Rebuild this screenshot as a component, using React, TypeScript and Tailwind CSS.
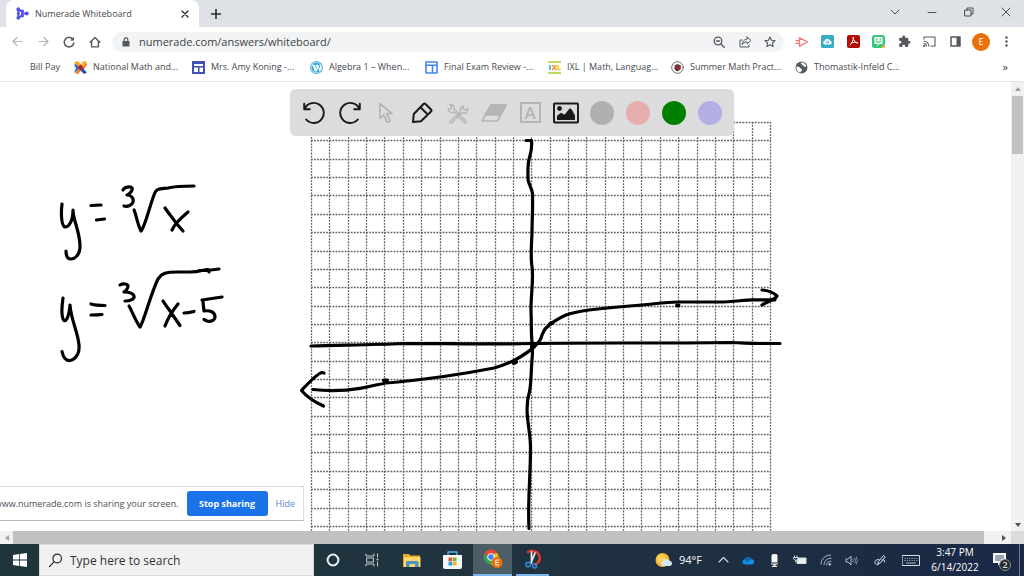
import type { ReactNode } from "react";

const FONT = "font-['Open_Sans','Noto_Sans',sans-serif]";

function Icon({
  size,
  width,
  box,
  stroke = 1.2,
  className = "",
  children,
}: {
  size: number;
  width?: number;
  box?: string;
  stroke?: number;
  className?: string;
  children: ReactNode;
}) {
  const w = width ?? size;
  return (
    <svg
      width={w}
      height={size}
      viewBox={box ?? `0 0 ${w} ${size}`}
      fill="none"
      stroke="currentColor"
      strokeWidth={stroke}
      strokeLinecap="round"
      strokeLinejoin="round"
      className={`shrink-0 ${className}`}
      aria-hidden="true"
    >
      {children}
    </svg>
  );
}

function IconButton({ label, className, children }: { label: string; className: string; children: ReactNode }) {
  return (
    <button type="button" aria-label={label} className={`flex shrink-0 items-center justify-center ${className}`}>
      {children}
    </button>
  );
}

function NumeradeLogo() {
  return (
    <Icon size={13} className="text-[#5452ee]" stroke={2}>
      <path d="M2.3 2.3v8.4M2.3 2.3l4 2.2M2.3 10.7l4-2.2M6.2 4.4v4M6.2 6.4h4.6" />
      <g fill="currentColor" stroke="none">
        <circle cx="2.3" cy="2.2" r="1.9" />
        <circle cx="2.3" cy="6.5" r="1.5" />
        <circle cx="2.3" cy="10.8" r="1.9" />
        <circle cx="6.3" cy="4.3" r="1.7" />
        <circle cx="6.3" cy="8.7" r="1.7" />
        <circle cx="10.8" cy="6.5" r="1.9" />
      </g>
    </Icon>
  );
}

function TabStrip() {
  return (
    <div className="flex h-[27px] shrink-0 bg-[#dee1e6] pl-[6px]">
      <div className="flex h-full w-[193px] shrink-0 items-center rounded-t-lg bg-white pr-2 pl-[10px]">
        <NumeradeLogo />
        <span className="ml-[6px] flex-1 text-[9px] leading-4 whitespace-nowrap text-[#45494d]">Numerade Whiteboard</span>
        <IconButton label="Close tab" className="size-3 text-[#2b2d30]">
          <Icon size={8} stroke={1.4}>
            <path d="M1 1l6 6M7 1l-6 6" />
          </Icon>
        </IconButton>
      </div>
      <IconButton label="New tab" className="ml-[10px] h-full w-[14px] text-[#2b2d30]">
        <Icon size={10} stroke={1.6}>
          <path d="M5 .5v9M.5 5h9" />
        </Icon>
      </IconButton>
      <div className="ml-auto flex h-6 text-[#4b4e52]">
        <IconButton label="Search tabs" className="w-[37px]">
          <Icon size={10} stroke={1}>
            <path d="M1 3l4 4 4-4" />
          </Icon>
        </IconButton>
        <IconButton label="Minimize" className="w-[37px]">
          <Icon size={10} stroke={1}>
            <path d="M1 5.5h8" />
          </Icon>
        </IconButton>
        <IconButton label="Restore" className="w-[37px]">
          <Icon size={10} stroke={1}>
            <path d="M1 3h6v6H1zM3 3V1h6v6H7" />
          </Icon>
        </IconButton>
        <IconButton label="Close" className="w-[37px]">
          <Icon size={10} stroke={1}>
            <path d="M1 1l8 8M9 1L1 9" />
          </Icon>
        </IconButton>
      </div>
    </div>
  );
}

function AddressRow() {
  return (
    <div className="flex h-[29px] shrink-0 items-center bg-white pr-[5px] pl-1 text-[#55595e]">
      <IconButton label="Back" className="h-5 w-[26px] text-[#b3b5b8]">
        <Icon size={11}>
          <path d="M10 5.5H1M5 1.5l-4 4 4 4" />
        </Icon>
      </IconButton>
      <IconButton label="Forward" className="h-5 w-[26px] text-[#b3b5b8]">
        <Icon size={11}>
          <path d="M1 5.5h9M6 1.5l4 4-4 4" />
        </Icon>
      </IconButton>
      <IconButton label="Reload" className="h-5 w-[26px]">
        <Icon size={12} stroke={1.5}>
          <path d="M10.2 3.7A4.8 4.8 0 1 0 10.8 7" />
          <path d="M10.9.8v3.8H7z" fill="currentColor" stroke="none" />
        </Icon>
      </IconButton>
      <IconButton label="Home" className="h-5 w-[26px]">
        <Icon size={12} stroke={1.4}>
          <path d="M1.2 6.3L6 1.4l4.8 4.9M2.6 5.3v5.6h6.8V5.3" />
        </Icon>
      </IconButton>
      <div className="ml-1 flex h-5 min-w-0 flex-1 items-center rounded-full bg-[#f1f3f4] pl-[10px]">
        <Icon size={10} width={8}>
          <rect x=".5" y="4" width="7" height="5.5" rx=".6" fill="currentColor" stroke="none" />
          <path d="M2.2 4V2.6a1.8 1.8 0 0 1 3.6 0V4" />
        </Icon>
        <input
          aria-label="Address and search bar"
          defaultValue="numerade.com/answers/whiteboard/"
          className="ml-[9px] h-5 min-w-0 flex-1 bg-transparent text-[11px] leading-5 text-[#3f4246] outline-none"
        />
        <IconButton label="Zoom" className="h-5 w-[26px]">
          <Icon size={12} stroke={1.3}>
            <circle cx="5" cy="5" r="3.8" />
            <path d="M8 8l3.2 3.2M3.4 5h3.2" />
          </Icon>
        </IconButton>
        <IconButton label="Share this page" className="h-5 w-[26px]">
          <Icon size={12} width={13} stroke={1}>
            <path d="M3 4H1v7h9V9M8 1l4 3.4L8 7.8V5.900C5.500 5.900 4 7 3.200 8.700 3.400 5.500 5 3.300 8 3z" />
          </Icon>
        </IconButton>
        <IconButton label="Bookmark this tab" className="h-5 w-6">
          <Icon size={12} stroke={1.1}>
            <path d="M6 1l1.500 3.200 3.500.4-2.600 2.400.7 3.500L6 8.800l-3.100 1.700.7-3.500L1 4.600l3.500-.4z" />
          </Icon>
        </IconButton>
        <div className="w-[2px]" />
      </div>
      <div className="ml-[5px] flex">
        <IconButton label="Screencastify" className="h-5 w-[26px] text-[#f3797b]">
          <Icon size={12} width={14} stroke={1.4}>
            <path d="M4.500 1.800v8.400L12.500 6zM1 4.600h3M1 7.400h3" />
          </Icon>
        </IconButton>
        <IconButton label="Cloud extension" className="h-5 w-[25px]">
          <Icon size={13}>
            <rect width="13" height="13" rx="1.500" fill="#35adc6" stroke="none" />
            <path d="M3.800 9.600a2 2 0 0 1-.2-3.900 2.800 2.800 0 0 1 5.300-.2 2.100 2.100 0 0 1 .2 4.100z" fill="#fff" stroke="none" />
            <circle cx="6.500" cy="7.200" r="1.200" stroke="#35adc6" strokeWidth=".8" />
          </Icon>
        </IconButton>
        <IconButton label="Adobe Acrobat" className="h-5 w-[26px]">
          <Icon size={13}>
            <rect width="13" height="13" rx="2" fill="#b30b00" stroke="none" />
            <path d="M6.300 2.600c.2 2.400-1.300 6-3.300 7.400M6.300 2.600c-.3 2.600 1.500 4.800 4 5.200M4.600 7.800c1.500-.6 3.700-.8 5.700 0" stroke="#fff" strokeWidth="1" />
          </Icon>
        </IconButton>
        <IconButton label="Bitmoji" className="h-5 w-[25px]">
          <Icon size={13}>
            <rect width="13" height="13" rx="2.500" fill="#34c77b" stroke="none" />
            <path d="M2.500 2h8v7h-3L5.500 11V9h-3z" fill="#fff" stroke="none" />
            <path d="M4.800 3.600v1M8.200 3.600v1M4.200 6c.8 1.600 3.800 1.600 4.600 0" stroke="#34c77b" />
            <path d="M8.500 13L13 9v2.500A1.500 1.500 0 0 1 11.500 13z" fill="#f5b93b" stroke="none" />
          </Icon>
        </IconButton>
        <IconButton label="Extensions" className="h-5 w-[26px]">
          <Icon size={13} box="0 0 24 24" stroke={0}>
            <path
              fill="currentColor"
              d="M20.500 11H19V7a2 2 0 0 0-2-2h-4V3.500a2.500 2.500 0 0 0-5 0V5H4a2 2 0 0 0-2 2v3.800h1.500a2.700 2.700 0 0 1 0 5.400H2V20a2 2 0 0 0 2 2h3.800v-1.500a2.700 2.700 0 0 1 5.400 0V22H17a2 2 0 0 0 2-2v-4h1.500a2.500 2.500 0 0 0 0-5z"
            />
          </Icon>
        </IconButton>
        <IconButton label="Cast" className="h-5 w-[25px]">
          <Icon size={11} width={13} stroke={1.1}>
            <path d="M1 3V1h11v9H8M1 5.200A5 5 0 0 1 5.800 10M1 7.500A2.600 2.600 0 0 1 3.500 10" />
            <circle cx="1.200" cy="9.900" r=".5" fill="currentColor" />
          </Icon>
        </IconButton>
        <IconButton label="Side panel" className="h-5 w-[26px]">
          <Icon size={11} width={11} stroke={1.500}>
            <path d="M1 1h9v9H1z" />
            <path d="M6.500 1H10v9H6.500z" fill="currentColor" stroke="none" />
          </Icon>
        </IconButton>
        <IconButton label="Profile" className="h-5 w-[26px]">
          <span className="flex size-[18px] items-center justify-center rounded-full bg-[#e8710a] text-[9px] leading-3 text-white">
            E
          </span>
        </IconButton>
        <IconButton label="Menu" className="h-5 w-[25px]">
          <Icon size={11} width={3} stroke={0}>
            <g fill="currentColor">
              <circle cx="1.500" cy="1.500" r="1.200" />
              <circle cx="1.500" cy="5.500" r="1.200" />
              <circle cx="1.500" cy="9.500" r="1.200" />
            </g>
          </Icon>
        </IconButton>
      </div>
    </div>
  );
}

function Bookmark({ label, className, children }: { label: string; className: string; children?: ReactNode }) {
  return (
    <a href="#bookmark" className={`flex shrink-0 items-center whitespace-nowrap ${className}`}>
      {children}
      <span>{label}</span>
    </a>
  );
}

function BookmarksBar() {
  return (
    <nav
      aria-label="Bookmarks"
      className="flex h-[26px] shrink-0 items-center border-b border-[#e2e4e6] bg-white pr-4 pb-[3px] pl-[30px] text-[9px] leading-4 text-[#45494d]"
    >
      <Bookmark label="Bill Pay" className="w-11" />
      <Bookmark label="National Math and..." className="w-[118px] gap-[6px]">
        <Icon size={13} stroke={0}>
          <path d="M0 1.500L4 0l4 5-3.500 3z" fill="#f6a21b" />
          <path d="M9 5l3-4 1 2.500L9.500 9 7 7z" fill="#f27f23" />
          <path d="M9.500 0L13 .8 8 7 5.500 5z" fill="#f9b233" />
          <path d="M0 4l1.500-1L6 7l-3 3L0 12l2-5z" fill="#2a6ec6" />
          <path d="M5 8l3-1.500 5 5L10 13z" fill="#2850a4" />
          <path d="M1 12.500L5 7l2.500 2L4 13z" fill="#f27f23" />
          <path d="M6.500 3.500l3 3-3 3-3-3z" fill="#a71e4f" />
        </Icon>
      </Bookmark>
      <Bookmark label="Mrs. Amy Koning -..." className="w-[118px] gap-[6px]">
        <Icon size={13} stroke={0}>
          <path d="M0 0h13v13H0z" fill="#3f51b5" />
          <path d="M2 3h9v2H2zM2 6.500h4V11H2zM7.500 6.500H11V11H7.500z" fill="#fff" />
        </Icon>
      </Bookmark>
      <Bookmark label="Algebra 1 – When..." className="w-[115px] gap-[6px]">
        <Icon size={13} stroke={1.100} className="text-white">
          <circle cx="6.500" cy="6.500" r="6.500" fill="#3aa6d6" stroke="none" />
          <circle cx="6.500" cy="6.500" r="5.400" strokeWidth=".7" />
          <path d="M2.600 4.200h1.800l2 5.600 1-2.800-1-2.800h1.500l2 5.400 1-3.600c0-1-.8-1.200-.9-2M3.200 4.200l2 6" />
        </Icon>
      </Bookmark>
      <Bookmark label="Final Exam Review -..." className="w-[123px] gap-[6px]">
        <Icon size={13} stroke={1.600} className="text-[#4285f4]">
          <path d="M1 1h11v11H1zM1 4.200h11M7.500 4.200V12" />
        </Icon>
      </Bookmark>
      <Bookmark label="IXL | Math, Languag..." className="w-[123px] gap-[6px]">
        <Icon size={13} stroke={1.500}>
          <path d="M0 1h13M0 12h13" stroke="#a6d12c" strokeLinecap="butt" />
          <path d="M2 4.500v4" stroke="#20a3dd" />
          <path d="M4.500 4.500l3.500 4M8 4.500l-3.500 4" stroke="#f7941e" />
          <path d="M10 4.500v4h2" stroke="#f5c518" />
        </Icon>
      </Bookmark>
      <Bookmark label="Summer Math Pract..." className="w-[124px] gap-[6px]">
        <Icon size={13} stroke={1}>
          <circle cx="6.500" cy="6.500" r="5.800" stroke="#66696d" />
          <path d="M3.500 4.500L6.500 3l3.500 1.500-.5 4-3 2-2.500-2z" fill="#6d3535" stroke="none" />
          <path d="M6.500 4.500l2 1.500-.5 2.500-2-.5z" fill="#c2212c" stroke="none" />
          <path d="M3.500 7l2 2.500" stroke="#2c2c2c" />
        </Icon>
      </Bookmark>
      <Bookmark label="Thomastik-Infeld C..." className="gap-[6px]">
        <Icon size={13} stroke={0}>
          <circle cx="6.500" cy="6.500" r="6" fill="#55595e" />
          <path d="M1.500 5.500c1.500 0 3 .5 3.500 1.500s1.800.5 2 1.500-.8 1.500-1.800 3C2.500 11 1 8.500 1.500 5.500zM6 1.600c-.5 1.200.2 1.800 1.200 2 1 .3.600 1.700 1.800 1.900.9.200 1.500-.4 2.200.8.500-2.500-2-5-5.200-4.700z" fill="#fff" />
        </Icon>
      </Bookmark>
      <button type="button" aria-label="More bookmarks" className="ml-auto text-[11px] leading-4">
        »
      </button>
    </nav>
  );
}

const GRID_STEPS = Array.from({ length: 26 }, (_, i) => i);
const CELL = 18.36;

function Drawing() {
  return (
    <svg
      width="800"
      height="449"
      viewBox="0 82 800 449"
      className="block shrink-0"
      role="img"
      aria-label="Graph of the cube root function"
    >
      <g stroke="#616161" strokeWidth="1.300" strokeDasharray="1.800 1.260" fill="none">
        {GRID_STEPS.map((i) => (
          <path key={`v${i}`} d={`M${311.5 + Math.round(i * CELL)} 122V582`} />
        ))}
        {GRID_STEPS.map((i) => (
          <path key={`h${i}`} d={`M311 ${122.5 + Math.round(i * CELL)}H771`} />
        ))}
      </g>
      <g stroke="#000" strokeWidth="3.200" fill="none" strokeLinecap="round" strokeLinejoin="round">
        <path d="M526 140.500h5.500c1 8-1 13-2.500 19s-1 15-1 20c1 6 4 9 4.500 14 .5 15-.5 28-.5 40-1 16-1.500 25 0 33 2 12-1.500 30-1 45 .5 10 0 22 1 30l.5 12c-2 22-1 28-3 38-3 10-3 16-2 26s3 20 3 30c0 30-3 55-1.500 81" />
        <path d="M311 346c32-1 60-1 92-2.500 40 0 90 1 128 0 50-1 130 0 200-1 15 .5 20 1.200 30 1h19" />
        <path d="M313 389.500c18 2 34 1 47-1.200 18-3 18-5.300 38-6.300 30-3 60-7 96-14 8-2 15-5 21-8 7-4 14-8 19-13 4-4 6-6 7-9 1-4 3-7 4-9 5-5 14-11 21-14 9-3 16-4 23-5 18-2 35-3.500 53-5 12-1 24-3 36-3h41c14 0 24-2 34-2.200h22" />
        <path d="M324 373l-2-.5c-5 1-14 11-20.500 18 6 7 13 11.500 22 15.500" />
        <path d="M762 290c7 .5 12 3 15 6-2 4-9 5-15 9" />
        <path d="M384 380.500h3M514 363l2-1M532 343v4M550 324l2-1M677 305.500h1.500" strokeWidth="4" />
        <path d="M62 204c-1 8-1 22 3 23 4 0 8-6 8-17 0 10 7 22 7 36 0 10-6 13-9 13-4 0-5-4-5-8" />
        <path d="M91 205.500l10-.5M96.500 220l8-1" />
        <path d="M123 190c1-3 8-4 9-2s-2 6-5 7c4 0 7 3 6 7-1 3-5 5-9 4" />
        <path d="M134 210c2 4 4 16 7 21 4-4 9-26 13-36 2-7 6-6 14-7 8-2 16-2 26-2" />
        <path d="M165 208c4 6 8 10 11 15l7 8M188 212c-6 5-13 11-16 18" />
        <path d="M63 298c-1 7-2 16 0 21 2 5 6-1 7-14 1 15 8 27 9 40 1 10-5 15-9 15.500-5 .5-7-4-8-9" />
        <path d="M91 304c5 1.500 9 1.500 14 1.500M91 315c4 0 7 0 11-.5" />
        <path d="M120 285c3-2 8-1 8 1s-2 5-4 6c4 0 9 1 10 4s-4 5-9 5" />
        <path d="M129 306c3 5 7 16 11 21 4-6 11-34 18-48 4-6 8-7 20-7h12c10 0 12-2 18-2.500M199 270.500h8l12-1.500M209 271v1" />
        <path d="M163 301c3 5 6 8 9 13l8 11.500M178 304c-5 6-10 14-13 22M184 313c4 0 8-1 10-1.500M202 300l20-3M203 302l1 9c6-1 11 1 11 6 0 3-4 5-8 4l-3-1.500" />
      </g>
    </svg>
  );
}

function WhiteboardToolbar() {
  const tool = "h-full w-9";
  return (
    <div
      role="toolbar"
      aria-label="Drawing tools"
      className="absolute top-[7px] left-[290px] flex h-[47px] rounded-md bg-[#dcdcdc] px-[6px] text-[#17191b]"
    >
      <IconButton label="Undo" className={tool}>
        <Icon size={24} stroke={1.900}>
          <path d="M2.200 2.800v5.500h5.600M2.500 8.200A10 10 0 1 1 4.200 18.500" />
        </Icon>
      </IconButton>
      <IconButton label="Redo" className={tool}>
        <Icon size={24} stroke={1.900}>
          <path d="M21.800 2.800v5.500h-5.600M21.500 8.200A10 10 0 1 0 19.800 18.500" />
        </Icon>
      </IconButton>
      <IconButton label="Select" className={`${tool} text-[#b5b5b5]`}>
        <Icon size={22} width={16} stroke={1.700}>
          <path d="M2 1.500v14.800l3.700-3.500 3.500 7.500 3-1.400-3.500-7.300H14z" />
        </Icon>
      </IconButton>
      <IconButton label="Pen" className={tool}>
        <Icon size={22} stroke={2}>
          <path d="M2 20l.8-8L12.500 2q1-1 2 0l5.500 5.500q1 1 0 2L10 19.200zM9.500 5.300l7.300 7.300" />
        </Icon>
      </IconButton>
      <IconButton label="Tools" className={`${tool} text-[#b5b5b5]`}>
        <Icon size={22} stroke={1.400}>
          <path d="M2.500 20L13.600 9.800M4 21.500L15 11M13.600 9.800c-1-2.200 0-5 3-6l-.5 3.200 2 1.200 2.700-1.900c.5 3.400-2.300 5.800-5.800 4.700M18 21.500L8.200 11.200M19.600 20L9.700 9.600M7 7.600l2.700 2M7 7.600c1.200-2.800-1-5.400-4-5l1.800 2.600-1 1.600-2.800.2c.5 2.800 3.200 4.200 5.200 3l2 1.200" />
        </Icon>
      </IconButton>
      <IconButton label="Eraser" className={`${tool} text-[#b5b5b5]`}>
        <Icon size={18} width={26} stroke={1.600}>
          <path d="M10 1h15l-8.500 16H1z" />
          <path d="M10 1h15l-5.500 10H4z" fill="currentColor" />
        </Icon>
      </IconButton>
      <IconButton label="Text" className={`${tool} text-[#b5b5b5]`}>
        <span className="flex size-[21px] items-center justify-center border-2 border-current text-[17px] leading-4 font-semibold">
          A
        </span>
      </IconButton>
      <IconButton label="Insert image" className={tool}>
        <Icon size={22} width={26} stroke={1.900}>
          <rect x="1" y="1.500" width="24" height="19" rx=".8" />
          <circle cx="6.500" cy="6.500" r="2.400" fill="currentColor" stroke="none" />
          <path d="M4 18v-4.200l4-3 3.500 2L17 6l2 2 3 5.500V18z" fill="currentColor" stroke="none" />
        </Icon>
      </IconButton>
      <IconButton label="Gray" className={tool}>
        <span className="size-6 rounded-full bg-[#b0b0b0]" />
      </IconButton>
      <IconButton label="Pink" className={tool}>
        <span className="size-6 rounded-full bg-[#e5afaf]" />
      </IconButton>
      <IconButton label="Green" className={tool}>
        <span className="size-6 rounded-full bg-[#008000]" />
      </IconButton>
      <IconButton label="Lavender" className={tool}>
        <span className="size-6 rounded-full bg-[#b2afe5]" />
      </IconButton>
    </div>
  );
}

function SharingBar() {
  return (
    <div className="absolute bottom-[10px] left-0 flex h-[35px] w-[304px] items-center justify-end overflow-hidden border border-l-0 border-[#dcdcdc] border-b-[#b8b8b8] bg-white pr-[8px] text-[9px] leading-4">
      <span className="shrink-0 whitespace-nowrap text-[#4b4f54]">www.numerade.com is sharing your screen.</span>
      <button type="button" className="ml-2 h-[25px] w-[81px] shrink-0 rounded-[3px] bg-[#1a73e8] font-bold text-white">
        Stop sharing
      </button>
      <button type="button" className="ml-2 shrink-0 text-[#5a87dc]">
        Hide
      </button>
    </div>
  );
}

function Arrow({ d }: { d: string }) {
  return (
    <Icon size={6} stroke={0}>
      <path d={d} fill="currentColor" />
    </Icon>
  );
}

function PageArea() {
  return (
    <div className="flex min-h-0 flex-1 flex-col">
      <div className="flex min-h-0 flex-1">
        <main className="relative flex min-w-0 flex-1 overflow-hidden bg-white">
          <Drawing />
          <WhiteboardToolbar />
          <SharingBar />
        </main>
        <div className="flex w-[13px] shrink-0 flex-col items-center bg-[#f1f1f1]">
          <IconButton label="Scroll up" className="h-[14px] w-full text-[#a0a0a0]">
            <Arrow d="M0 5l3-4 3 4z" />
          </IconButton>
          <div className="h-[58px] w-[11px] bg-[#c1c1c1]" />
          <IconButton label="Scroll down" className="mt-auto h-[13px] w-full text-[#505050]">
            <Arrow d="M0 1l3 4 3-4z" />
          </IconButton>
        </div>
      </div>
      <div className="flex h-[13px] shrink-0 bg-[#f1f1f1]">
        <IconButton label="Scroll left" className="h-full w-[13px] text-[#a0a0a0]">
          <Arrow d="M5 0L1 3l4 3z" />
        </IconButton>
        <div className="h-full flex-1 bg-[#c1c1c1]" />
        <div className="w-[13px]" />
        <IconButton label="Scroll right" className="h-full w-[14px] text-[#505050]">
          <Arrow d="M1 0l4 3-4 3z" />
        </IconButton>
        <div className="h-full w-[13px] bg-[#dcdcdc]" />
      </div>
    </div>
  );
}

function Taskbar() {
  return (
    <footer className="flex h-8 shrink-0 items-stretch bg-linear-to-r from-[#1f353d] via-[#20333f] to-[#1a2846] text-white">
      <IconButton label="Start" className="w-[39px]">
        <Icon size={14} stroke={0}>
          <path d="M0 2l6-.9v5.500H0zM6.800 1L14 0v6.600H6.800zM0 7.400h6v5.500L0 12zM6.800 7.400H14V14l-7.200-1z" fill="#fff" />
        </Icon>
      </IconButton>
      <label className="flex w-[275px] shrink-0 items-center border border-[#dadada] bg-[#f1f1f1] pl-2 text-[#2c2c2c]">
        <Icon size={15} stroke={1.200}>
          <circle cx="9.200" cy="5.500" r="4.300" />
          <path d="M6 8.800L1.500 13.500" />
        </Icon>
        <input
          aria-label="Type here to search"
          placeholder="Type here to search"
          className="ml-[7px] h-full min-w-0 flex-1 bg-transparent text-[12px] leading-5 outline-none placeholder:text-[#333333]"
        />
      </label>
      <IconButton label="Cortana" className="w-[38px]">
        <Icon size={14} stroke={2} className="text-[#e3f1f3]">
          <circle cx="7" cy="7" r="5.400" />
        </Icon>
      </IconButton>
      <IconButton label="Task view" className="w-10 text-[#c4cfd4]">
        <Icon size={14} width={15} stroke={1}>
          <path d="M1 1v2h8V1M1 13v-2h8v2M2 5h6.500v4H2zM12.500 1v3M12.500 9v4" />
          <circle cx="12.500" cy="6.500" r="1" fill="currentColor" stroke="none" />
        </Icon>
      </IconButton>
      <IconButton label="File Explorer" className="w-10">
        <Icon size={15} width={18} stroke={0}>
          <path d="M0 1h6l1.500 1.500H17V14H0z" fill="#e7a92d" />
          <path d="M1 4h16.500v10H1z" fill="#ffd869" />
          <path d="M3 14V9.500q0-1.500 1.500-1.500h9.500q1.500 0 1.500 1.500V14h-3.500v-3H6.500v3z" fill="#4a93c5" />
        </Icon>
      </IconButton>
      <IconButton label="Microsoft Store" className="w-10">
        <Icon size={19} stroke={0}>
          <path d="M5 5V1h9v4" stroke="#51b9e7" strokeWidth="1.300" />
          <path d="M0 4h19v12q0 2-2 2H2q-2 0-2-2z" fill="#f5f7f8" />
          <path d="M5.500 6.500h3.700v3.700H5.500z" fill="#e9532b" />
          <path d="M9.800 6.500h3.700v3.700H9.800z" fill="#7cb928" />
          <path d="M5.500 10.800h3.700v3.700H5.500z" fill="#1ba1e2" />
          <path d="M9.800 10.800h3.700v3.700H9.800z" fill="#f5b51c" />
        </Icon>
      </IconButton>
      <IconButton label="Chrome" className="ml-[1px] w-[39px] border-b-2 border-[#79b7ef] bg-[#4c5d66]">
        <Icon size={20} stroke={0}>
          <circle cx="8" cy="8" r="7.500" fill="#34a353" />
          <path d="M1.500 4.200A7.500 7.500 0 0 1 14.600 4.500H8L4.800 8.500z" fill="#e94335" />
          <path d="M14.600 4.500A7.500 7.500 0 0 1 7.500 15.500L11 10V4.500z" fill="#fbbc05" />
          <circle cx="8" cy="8" r="3.400" fill="#4285f4" stroke="#fff" strokeWidth="1" />
          <circle cx="14" cy="13.500" r="5.500" fill="#e8710a" />
          <path d="M15.800 11h-3v5h3M12.800 13.500h2.500" stroke="#fff" strokeWidth=".9" />
        </Icon>
      </IconButton>
      <IconButton label="Snip" className="ml-1 w-[33px] border-b-2 border-[#79b7ef]">
        <Icon size={20} width={18} stroke={0}>
          <path d="M4 3C8 .5 14 2 15.500 7c1 4-1 7-4.500 8.500" stroke="#d8382b" strokeWidth="2.500" />
          <path d="M7.500 3v11M11 4L7 14" stroke="#dfe5e8" strokeWidth="1.800" />
          <circle cx="4.200" cy="15.500" r="2.300" stroke="#2d8fdd" strokeWidth="1.500" />
          <circle cx="10.500" cy="17" r="2" stroke="#2d8fdd" strokeWidth="1.500" />
        </Icon>
      </IconButton>
      <div className="ml-auto flex text-[#d7dde3]">
        <button type="button" className="flex w-[55px] items-center gap-[7px] text-[11px] leading-4 whitespace-nowrap text-white">
          <Icon size={17} stroke={0}>
            <circle cx="7.500" cy="8" r="7" fill="#f8b62e" />
            <circle cx="6.500" cy="7" r="4.500" fill="#ffcf57" />
            <path d="M8.500 14a2.500 2.500 0 0 1 0-5 3.300 3.300 0 0 1 6-.2A2.600 2.600 0 0 1 14.300 14z" fill="#d4e7f7" />
          </Icon>
          94°F
        </button>
        <IconButton label="Show hidden icons" className="w-[26px]">
          <Icon size={10} width={11} stroke={1.100}>
            <path d="M1 7l4.500-4.500L10 7" />
          </Icon>
        </IconButton>
        <IconButton label="OneDrive" className="w-[25px]">
          <Icon size={9} width={13} stroke={0}>
            <path d="M3 8.500a2.700 2.700 0 0 1-.5-5.300A4 4 0 0 1 9.500 3a2.900 2.900 0 0 1 1 5.500z" fill="#1490df" />
            <path d="M2.500 3.200A4 4 0 0 1 9.500 3L5 6z" fill="#0a64b8" />
          </Icon>
        </IconButton>
        <IconButton label="Microphone" className="w-[26px]">
          <Icon size={13} width={9} stroke={0}>
            <path d="M1.500 1.200Q1.500 0 4.500 0t3 1.200V8.500h-6zM1 9.500h7v1H5.500V12h1.500v1H2v-1h1.500v-1.500H1z" fill="#f4f6f8" />
          </Icon>
        </IconButton>
        <IconButton label="Battery" className="w-[26px]">
          <Icon size={10} width={14} stroke={1}>
            <path d="M5 3h8v5.500H4V6" fill="#e8edf2" />
            <path d="M1.500 1v1.500M4 1v1.500M.8 2.500h4v1.500L3.500 5.200H2.200L.8 4zM2.800 5.200V7" />
          </Icon>
        </IconButton>
        <IconButton label="Wi-Fi" className="w-[25px] text-[#a8b3c0]">
          <Icon size={12} stroke={1}>
            <path d="M1 10A9 9 0 0 1 10.500 1M4 10.500A6.500 6.500 0 0 1 11 4.200M6.500 11A4 4 0 0 1 11 7.200" />
            <circle cx="9.700" cy="10.300" r="1" fill="currentColor" />
          </Icon>
        </IconButton>
        <IconButton label="Volume" className="w-[26px] text-[#b4bec9]">
          <Icon size={11} width={13} stroke={1}>
            <path d="M1 4v3h2l3 3V1L3 4z" />
            <path d="M8 4.200q1 1.300 0 2.600M9.800 3q1.800 2.500 0 5M11.400 2q2.200 3.500 0 7" strokeWidth=".7" />
          </Icon>
        </IconButton>
        <IconButton label="Pen workspace" className="w-[31px]">
          <Icon size={12} stroke={1}>
            <path d="M4.500 7.500L9.500 1.500l1.800 1.500-5 6L4 9.500zM5 5.500c-3-.5-4.500 2-4 3.500s2.500 2.500 4 1M8 6c2-1 3 .5 2.500 2" />
          </Icon>
        </IconButton>
        <IconButton label="Touch keyboard" className="w-[32px]">
          <Icon size={11} width={18} stroke={1}>
            <rect x=".5" y=".5" width="17" height="10" />
            <path d="M2.500 3.500h13M2.500 5.500h13" strokeDasharray="1 1.400" strokeWidth=".8" strokeLinecap="butt" />
            <path d="M4.500 8h9" strokeWidth=".8" />
          </Icon>
        </IconButton>
        <button type="button" className="w-14 text-center text-[10px] leading-[15px] whitespace-nowrap text-white">
          3:47 PM
          <br />
          6/14/2022
        </button>
        <button type="button" aria-label="Notifications, 2 new" className="relative flex w-[37px] items-center border-r border-[#6d7889] pl-[10px]">
          <Icon size={14} width={14} stroke={0}>
            <path d="M0 0h13v10H7.500L5 12.500V10H0z" fill="#f4f6f8" />
            <path d="M2.500 3h8M2.500 5h8M2.500 7h5" stroke="#1b2a45" strokeWidth=".8" />
          </Icon>
          <span className="absolute top-[15px] left-[16px] flex size-3 items-center justify-center rounded-full border border-[#8b8f94] bg-[#25292e] text-[9px] leading-3 font-semibold">
            2
          </span>
        </button>
        <div className="w-[4px]" />
      </div>
    </footer>
  );
}

export default function App() {
  return (
    <div className={`flex h-screen flex-col overflow-hidden bg-white ${FONT}`}>
      <TabStrip />
      <AddressRow />
      <BookmarksBar />
      <PageArea />
      <Taskbar />
    </div>
  );
}
